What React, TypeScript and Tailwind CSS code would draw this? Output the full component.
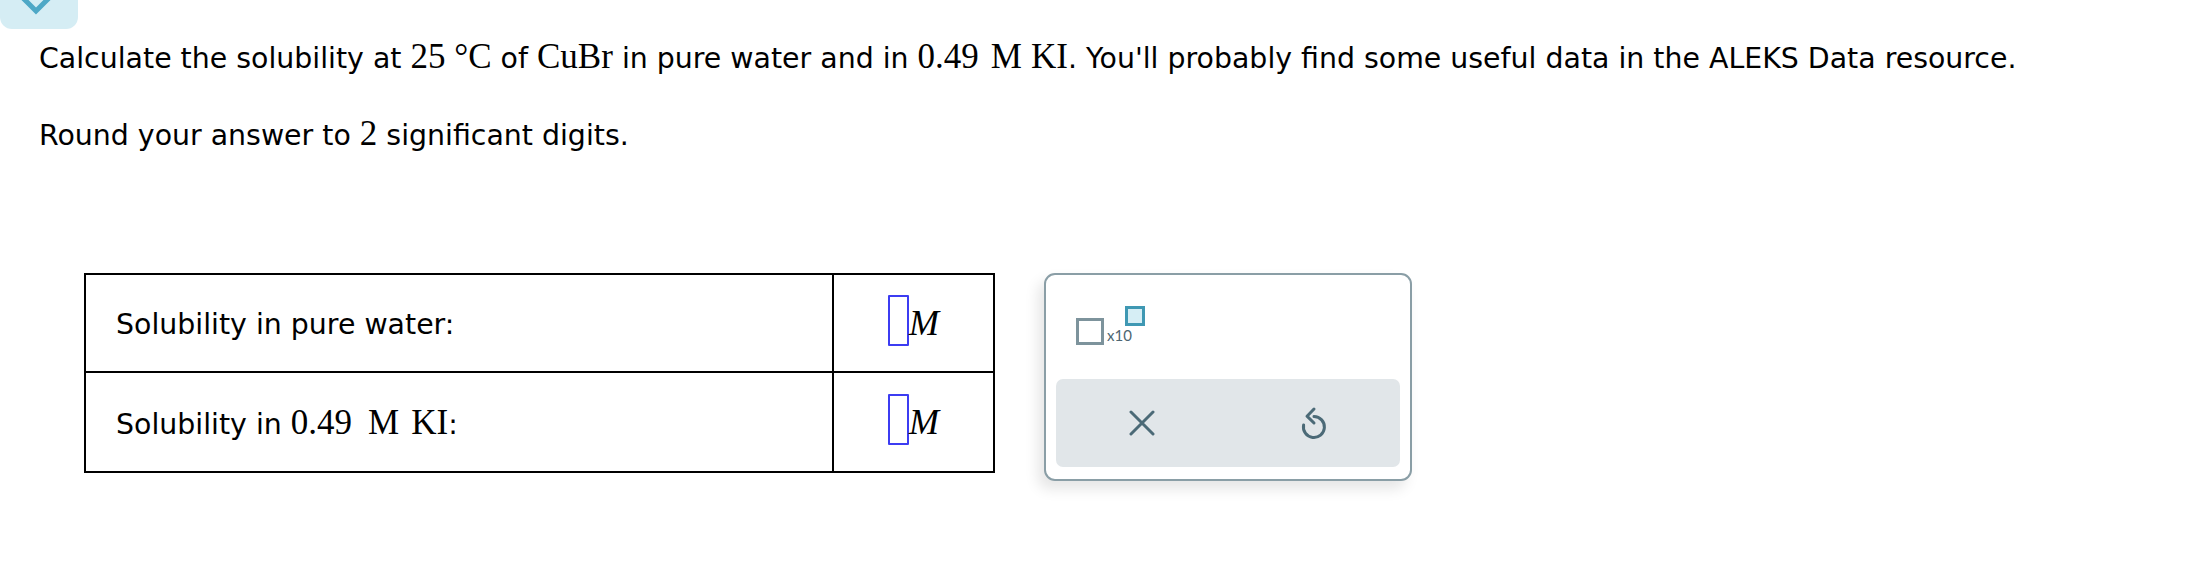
import React from "react";

function MathText({ children }: { children: React.ReactNode }) {
  return <span className="font-['Liberation_Serif',serif] text-[35px]">{children}</span>;
}

// "0.49 M KI" as typeset with explicit math spaces
function Molarity({ wide = false }: { wide?: boolean }) {
  return (
    <MathText>
      0.49<span className={wide ? "ml-[16px]" : "ml-[12px]"}>M</span>
      <span className={wide ? "ml-[12px]" : "ml-[9px]"}>KI</span>
    </MathText>
  );
}

function AnswerCell() {
  return (
    <div className="w-[161px] border-l-2 border-black flex items-center justify-center">
      <div className="flex items-center -mt-[6px]">
        <div className="w-[21px] h-[51px] border-2 border-[#3c3cf2] rounded-[1px]" />
        <span className="font-['Liberation_Serif',serif] italic text-[36px] leading-none translate-y-[3px]">M</span>
      </div>
    </div>
  );
}

export default function App() {
  return (
    <div className="w-[2186px] h-[562px] bg-white text-black font-['DejaVu_Sans',sans-serif] overflow-hidden">
      {/* collapse tab */}
      <div className="w-[78px] h-[29px] bg-[#d5edf4] rounded-b-[12px] overflow-hidden">
        <svg width="78" height="29" viewBox="0 0 78 29">
          <polyline points="21,-4 36,11 51,-4" fill="none" stroke="#4ea8c6" strokeWidth="5" />
        </svg>
      </div>

      <div className="pl-[39px] text-[28.4px] leading-[40px]">
        <p className="mt-[8px]">
          Calculate the solubility at <MathText>25 °C</MathText> of <MathText>CuBr</MathText> in pure water and in{" "}
          <Molarity />. You'll probably find some useful data in the ALEKS Data resource.
        </p>
        <p className="mt-[35px]">
          Round your answer to <MathText>2</MathText> significant digits.
        </p>
      </div>

      <div className="flex items-start mt-[117px] ml-[84px] gap-[49px]">
        {/* answer table */}
        <div className="w-[911px] border-2 border-black text-[28.4px]">
          <div className="flex h-[98px] border-b-2 border-black">
            <div className="flex-1 flex items-center pl-[30px] pt-[4px]">Solubility in pure water:</div>
            <AnswerCell />
          </div>
          <div className="flex h-[98px]">
            <div className="flex-1 flex items-center pl-[30px] pt-[2px]">
              <span>
                Solubility in <Molarity wide />:
              </span>
            </div>
            <AnswerCell />
          </div>
        </div>

        {/* tool panel */}
        <div className="w-[368px] h-[208px] border-2 border-[#8a9ea6] rounded-[11px] bg-white shadow-[-6px_8px_14px_rgba(0,0,0,0.10)] px-[10px] flex flex-col">
          <div className="flex items-start h-[104px] pt-[31px] pl-[20px]">
            <div className="w-[28px] h-[27px] border-[3px] border-[#7d939c] mt-[12px]" />
            <span className="font-['Lato',sans-serif] text-[15px] leading-none text-[#4d6672] ml-[3px] mt-[22px]">x10</span>
            <div className="w-[20px] h-[20px] border-[3px] border-[#3f98b3] bg-[#d6eef5] ml-[-7px]" />
          </div>
          <div className="h-[88px] bg-[#e1e6e9] rounded-[7px] flex">
            <button className="flex-1 flex items-center justify-center">
              <svg width="26" height="26" viewBox="0 0 26 26">
                <path d="M2 2 L24 24 M24 2 L2 24" stroke="#4b6a77" strokeWidth="3" strokeLinecap="round" />
              </svg>
            </button>
            <button className="flex-1 flex items-center justify-center">
              <svg width="30" height="36" viewBox="0 0 30 36" className="mt-[2px]">
                <path d="M15 10.5 A10.5 10.5 0 1 1 4.6 19" fill="none" stroke="#4b6a77" strokeWidth="3" strokeLinecap="round" />
                <path d="M15 3 L8 10.2 L15 17" fill="none" stroke="#4b6a77" strokeWidth="3" strokeLinecap="round" strokeLinejoin="round" />
              </svg>
            </button>
          </div>
        </div>
      </div>
    </div>
  );
}
